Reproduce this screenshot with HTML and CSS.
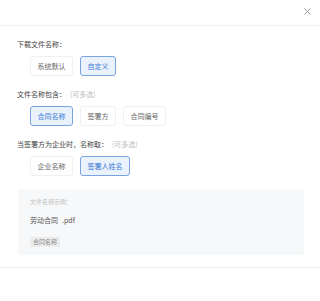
FILE: index.html
```html
<!DOCTYPE html>
<html lang="zh-CN">
  <head>
    <meta charset="UTF-8" />
    <meta name="viewport" content="width=device-width, initial-scale=1.0" />
    <title>下载文件名称</title>
    <link rel="stylesheet" href="styles.css">
  </head>
  <body>
    <div class="dialog">
      <div class="dialog-header">
        <span class="close-btn">
          <svg width="7" height="7" viewBox="0 0 7 7">
            <path d="M0.5 0.5 L6.5 6.5 M6.5 0.5 L0.5 6.5" stroke="#9a9a9a" stroke-width="1" />
          </svg>
        </span>
      </div>

      <div class="dialog-body">
        <!-- 下载文件名称 -->
        <div class="field">
          <div class="field-label">下载文件名称：</div>
          <div class="option-row">
            <span class="option">系统默认</span>
            <span class="option active">自定义</span>
          </div>
        </div>

        <!-- 文件名称包含 -->
        <div class="field">
          <div class="field-label">文件名称包含：<span class="hint">(可多选)</span></div>
          <div class="option-row">
            <span class="option active">合同名称</span>
            <span class="option">签署方</span>
            <span class="option">合同编号</span>
          </div>
        </div>

        <!-- 签署方为企业 -->
        <div class="field">
          <div class="field-label">当签署方为企业时，名称取：<span class="hint">(可多选)</span></div>
          <div class="option-row">
            <span class="option">企业名称</span>
            <span class="option active">签署人姓名</span>
          </div>
        </div>

        <div class="example-box">
          <div class="example-title">文件名称示例：</div>
          <div class="example-name">劳动合同<span class="ext">.pdf</span></div>
          <span class="example-tag">合同名称</span>
        </div>
      </div>

      <div class="dialog-footer"></div>
    </div>
  </body>
</html>
```

FILE: styles.css
```css
body {
  margin: 0;
  background: #fff;
  font-family: "Noto Sans CJK SC", "Noto Sans", sans-serif;
  color: #333;
}

.dialog {
  width: 320px;
}

/* Header with close icon */
.dialog-header {
  height: 26px;
  border-bottom: 1px solid #f0f0f0;
  display: flex;
  justify-content: flex-end;
  align-items: center;
  padding-right: 9px;
  box-sizing: border-box;
}

.close-btn {
  display: flex;
  margin-top: -2px;
}

.dialog-body {
  padding: 13px 16px 0 17px;
}

.field {
  margin-bottom: 13px;
}

.field-label {
  font-size: 7px;
  line-height: 10px;
  color: #444;
}

.hint {
  color: #bbb;
  margin-left: 4px;
}

/* Option buttons */
.option-row {
  display: flex;
  gap: 7px;
  margin: 7px 0 0 13px;
}

.option {
  height: 20px;
  box-sizing: border-box;
  padding: 0 6.5px;
  border: 1px solid #f0f0f0;
  border-radius: 3px;
  font-size: 7px;
  line-height: 18px;
  color: #666;
  background: #fff;
}

.option.active {
  border-color: #7aa3e0;
  background: #eaf2fd;
  color: #3a78d4;
}

/* Example preview */
.example-box {
  margin-left: 1px;
  background: #f7f8fa;
  padding: 8px 12px 6px;
  border-radius: 2px;
}

.example-title {
  font-size: 6px;
  line-height: 10px;
  color: #c0c0c0;
}

.example-name {
  margin-top: 8px;
  font-size: 7px;
  line-height: 10px;
  color: #555;
}

.example-name .ext {
  margin-left: 4px;
}

.example-tag {
  display: inline-block;
  margin-top: 11px;
  padding: 0 3px;
  background: #ececec;
  border-radius: 1px;
  font-size: 6px;
  line-height: 10px;
  color: #888;
}

.dialog-footer {
  margin-top: 12px;
  border-top: 1px solid #f0f0f0;
}
```
